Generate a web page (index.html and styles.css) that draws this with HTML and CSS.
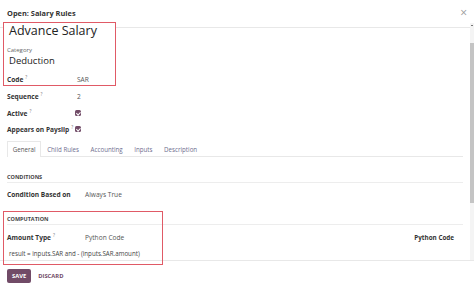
FILE: index.html
```html
<!DOCTYPE html>
<html lang="en">
  <head>
    <meta charset="UTF-8" />
    <title>Open: Salary Rules</title>
    <link rel="stylesheet" href="styles.css">
  </head>
  <body>
    <div class="modal">
      <div class="modal-header">
        <h4>Open: Salary Rules</h4>
        <span class="close">&times;</span>
      </div>

      <div class="modal-body">
        <div class="sheet">
          <div class="title-block">
            <div class="rule-name">Advance Salary</div>
            <div class="small-label">Category</div>
            <div class="category">Deduction</div>
          </div>

          <div class="fields">
            <div class="field-row">
              <label>Code<sup>?</sup></label>
              <span>SAR</span>
            </div>
            <div class="field-row">
              <label>Sequence<sup>?</sup></label>
              <span>2</span>
            </div>
            <div class="field-row">
              <label>Active<sup>?</sup></label>
              <span class="check"></span>
            </div>
            <div class="field-row last">
              <label>Appears on Payslip<sup>?</sup></label>
              <span class="check"></span>
            </div>
          </div>

          <div class="tabs">
            <span class="tab active">General</span>
            <span class="tab">Child Rules</span>
            <span class="tab">Accounting</span>
            <span class="tab">Inputs</span>
            <span class="tab">Description</span>
          </div>

          <div class="section conditions">
            <div class="section-title">Conditions</div>
            <div class="field-row wide">
              <label>Condition Based on</label>
              <span>Always True</span>
            </div>
          </div>

          <div class="section computation">
            <div class="section-title">Computation</div>
            <div class="field-row wide">
              <label>Amount Type<sup>?</sup></label>
              <span>Python Code</span>
              <b class="right">Python Code</b>
            </div>
            <div class="code-line">result = inputs.SAR and - (inputs.SAR.amount)</div>
          </div>
        </div>

        <div class="scrollbar">
          <div class="arrow"></div>
          <div class="thumb"></div>
        </div>
      </div>

      <div class="modal-footer">
        <button type="button" class="btn-save">SAVE</button>
        <button type="button" class="btn-discard">DISCARD</button>
      </div>

      <!-- highlight boxes drawn over the form -->
      <div class="mark mark-top"></div>
      <div class="mark mark-computation"></div>
    </div>
  </body>
</html>
```

FILE: styles.css
```css
body {
  margin: 0;
  font-family: "Open Sans", "Noto Sans", sans-serif;
  color: #4c4c4c;
  background-color: #fff;
}
.modal {
  position: relative;
  width: 474px;
  height: 296px;
  overflow: hidden;
}

.modal-header {
  display: flex;
  justify-content: space-between;
  align-items: center;
  height: 28px;
  padding: 0 7px 1px 7px;
  border-bottom: 1px solid #e8e8e8;
  box-sizing: border-box;
}
.modal-header h4 {
  margin: 0;
  font-size: 7.4px;
  font-weight: 700;
  color: #333;
}
.modal-header .close {
  font-size: 12px;
  color: #9a9a9a;
  line-height: 1;
}

.modal-body {
  position: relative;
  height: 238px;
  border-bottom: 1px solid #e8e8e8;
  box-sizing: border-box;
}
.sheet {
  position: relative;
  z-index: 1;
  padding: 0 11px 0 7px;
  margin-top: -5px;
}

.title-block {
  padding-left: 2px;
}
.rule-name {
  font-size: 12.5px;
  line-height: 16px;
  color: #222;
}
.small-label {
  font-size: 6px;
  line-height: 10px;
  color: #666;
  margin-top: 6px;
  margin-left: -2px;
}
.category {
  font-size: 9.5px;
  line-height: 12px;
  color: #222;
}

.fields {
  margin-top: 3.5px;
}
.field-row {
  display: flex;
  align-items: center;
  height: 17px;
  font-size: 6.6px;
  color: #555;
}
.field-row.last {
  height: 15px;
}
.field-row label {
  width: 70px;
  font-weight: 700;
  color: #333;
}
.field-row sup {
  font-size: 4.5px;
  font-weight: 400;
  margin-left: 2px;
  color: #777;
}
.field-row.wide {
  height: 16px;
}
.field-row.wide label {
  width: 78px;
}
.field-row .right {
  margin-left: auto;
  margin-right: 9px;
  font-size: 6.3px;
  color: #333;
}

.check {
  display: inline-block;
  width: 6px;
  height: 6px;
  border-radius: 1.5px;
  background-color: #714b67;
  position: relative;
  margin-left: -2.5px;
}
.check::after {
  content: "";
  position: absolute;
  left: 2px;
  top: 0.5px;
  width: 1.5px;
  height: 3px;
  border: solid #fff;
  border-width: 0 1px 1px 0;
  transform: rotate(45deg);
}

.tabs {
  display: flex;
  margin-top: 4.5px;
  border-bottom: 1px solid #e8e8e8;
  font-size: 6.2px;
}
.tab {
  height: 16px;
  line-height: 16px;
  padding: 0 4.8px;
  color: #6f6e8f;
  border: 1px solid transparent;
  border-bottom: none;
  margin-bottom: -1px;
  box-sizing: border-box;
}
.tab.active {
  color: #555;
  border-color: #e8e8e8;
  background-color: #fff;
}

.section-title {
  font-size: 5.5px;
  line-height: 9px;
  font-weight: 700;
  text-transform: uppercase;
  color: #444;
  border-bottom: 1px solid #ededed;
}
.conditions {
  margin-top: 15.5px;
}
.conditions .field-row {
  margin-top: 3.5px;
}
.computation {
  margin-top: 12.5px;
}
.computation .field-row {
  margin-top: 4.5px;
}
.code-line {
  font-size: 6.2px;
  line-height: 10px;
  color: #444;
  margin-top: 4px;
  padding-left: 2px;
}

.scrollbar {
  position: absolute;
  right: 0;
  top: 0;
  bottom: 0;
  width: 4px;
  background-color: #f4f4f4;
}
.scrollbar .arrow {
  width: 2px;
  height: 1px;
  margin: 2px 0 0 1px;
  background-color: #777;
}
.scrollbar .thumb {
  margin-top: 17px;
  height: 160px;
  background-color: #c4c4c4;
}

.modal-footer {
  display: flex;
  align-items: center;
  gap: 7px;
  padding: 0 7px;
  height: 30px;
}
.btn-save {
  background-color: #714b67;
  color: #fff;
  border: none;
  border-radius: 2px;
  font-family: inherit;
  font-size: 5.8px;
  font-weight: 700;
  height: 14px;
  padding: 0 5px;
}
.btn-discard {
  background: none;
  border: none;
  color: #714b67;
  font-family: inherit;
  font-size: 5.8px;
  font-weight: 700;
  padding: 0;
}

.mark {
  position: absolute;
  border: 1.5px solid #e05a66;
  box-sizing: border-box;
  pointer-events: none;
}
.mark-top {
  left: 2.5px;
  top: 22px;
  width: 113px;
  height: 64px;
  background-color: #fff;
}
.mark-computation {
  left: 3px;
  top: 211px;
  width: 160px;
  height: 54px;
  z-index: 2;
}
```
